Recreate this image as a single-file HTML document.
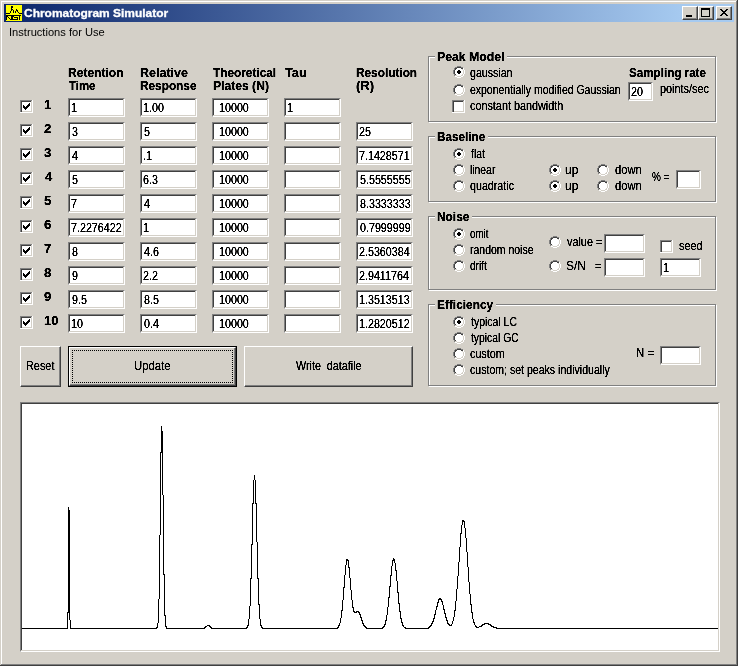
<!DOCTYPE html>
<html><head><meta charset="utf-8"><title>Chromatogram Simulator</title>
<style>

html,body{margin:0;padding:0;background:#D4D0C8;}
body{width:738px;height:666px;overflow:hidden;position:relative;font-family:"Liberation Sans",sans-serif;color:#000;}
#win{position:absolute;left:0;top:0;width:738px;height:666px;background:#D4D0C8;overflow:hidden;}
.abs{position:absolute;display:block;shape-rendering:crispEdges;}
.t{position:absolute;white-space:pre;font-size:12.3px;line-height:14px;height:14px;transform-origin:0 0;}
.b{font-weight:bold;}
.bm{filter:url(#bm);}
.tah{font-size:11px;}
.edit{position:absolute;background:#fff;border:1px solid;border-color:#808080 #fff #fff #808080;
  box-shadow:inset -1px -1px 0 0 #D4D0C8,inset 1px 1px 0 0 #404040;}
.gw{position:absolute;border:1px solid #fff;}
.gg{position:absolute;border:1px solid #808080;}
.lg{position:absolute;background:#D4D0C8;}
.btn{position:absolute;background:#D4D0C8;border:1px solid;border-color:#fff #404040 #404040 #fff;
  box-shadow:inset -1px -1px 0 0 #808080;}
.def{position:absolute;border:1px solid #000;}
.focus{position:absolute;border:1px dotted #000;}
.ln{position:absolute;}

</style></head><body><div id="win">
<svg width="0" height="0" style="position:absolute"><defs>
<symbol id="rb0" viewBox="0 0 12 12"><rect x="4" y="0" width="4" height="1" fill="#808080"/><rect x="2" y="1" width="2" height="1" fill="#808080"/><rect x="4" y="1" width="4" height="1" fill="#404040"/><rect x="8" y="1" width="2" height="1" fill="#808080"/><rect x="1" y="2" width="1" height="1" fill="#808080"/><rect x="2" y="2" width="2" height="1" fill="#404040"/><rect x="4" y="2" width="4" height="1" fill="#FFFFFF"/><rect x="8" y="2" width="2" height="1" fill="#404040"/><rect x="10" y="2" width="1" height="1" fill="#FFFFFF"/><rect x="1" y="3" width="1" height="1" fill="#808080"/><rect x="2" y="3" width="1" height="1" fill="#404040"/><rect x="3" y="3" width="6" height="1" fill="#FFFFFF"/><rect x="9" y="3" width="1" height="1" fill="#D4D0C8"/><rect x="10" y="3" width="1" height="1" fill="#FFFFFF"/><rect x="0" y="4" width="1" height="1" fill="#808080"/><rect x="1" y="4" width="1" height="1" fill="#404040"/><rect x="2" y="4" width="8" height="1" fill="#FFFFFF"/><rect x="10" y="4" width="1" height="1" fill="#D4D0C8"/><rect x="11" y="4" width="1" height="1" fill="#FFFFFF"/><rect x="0" y="5" width="1" height="1" fill="#808080"/><rect x="1" y="5" width="1" height="1" fill="#404040"/><rect x="2" y="5" width="8" height="1" fill="#FFFFFF"/><rect x="10" y="5" width="1" height="1" fill="#D4D0C8"/><rect x="11" y="5" width="1" height="1" fill="#FFFFFF"/><rect x="0" y="6" width="1" height="1" fill="#808080"/><rect x="1" y="6" width="1" height="1" fill="#404040"/><rect x="2" y="6" width="8" height="1" fill="#FFFFFF"/><rect x="10" y="6" width="1" height="1" fill="#D4D0C8"/><rect x="11" y="6" width="1" height="1" fill="#FFFFFF"/><rect x="0" y="7" width="1" height="1" fill="#808080"/><rect x="1" y="7" width="1" height="1" fill="#404040"/><rect x="2" y="7" width="8" height="1" fill="#FFFFFF"/><rect x="10" y="7" width="1" height="1" fill="#D4D0C8"/><rect x="11" y="7" width="1" height="1" fill="#FFFFFF"/><rect x="1" y="8" width="1" height="1" fill="#808080"/><rect x="2" y="8" width="1" height="1" fill="#404040"/><rect x="3" y="8" width="6" height="1" fill="#FFFFFF"/><rect x="9" y="8" width="1" height="1" fill="#D4D0C8"/><rect x="10" y="8" width="1" height="1" fill="#FFFFFF"/><rect x="1" y="9" width="1" height="1" fill="#808080"/><rect x="2" y="9" width="2" height="1" fill="#D4D0C8"/><rect x="4" y="9" width="4" height="1" fill="#FFFFFF"/><rect x="8" y="9" width="2" height="1" fill="#D4D0C8"/><rect x="10" y="9" width="1" height="1" fill="#FFFFFF"/><rect x="2" y="10" width="2" height="1" fill="#FFFFFF"/><rect x="4" y="10" width="4" height="1" fill="#D4D0C8"/><rect x="8" y="10" width="2" height="1" fill="#FFFFFF"/><rect x="4" y="11" width="4" height="1" fill="#FFFFFF"/></symbol>
<symbol id="rb1" viewBox="0 0 12 12"><rect x="4" y="0" width="4" height="1" fill="#808080"/><rect x="2" y="1" width="2" height="1" fill="#808080"/><rect x="4" y="1" width="4" height="1" fill="#404040"/><rect x="8" y="1" width="2" height="1" fill="#808080"/><rect x="1" y="2" width="1" height="1" fill="#808080"/><rect x="2" y="2" width="2" height="1" fill="#404040"/><rect x="4" y="2" width="4" height="1" fill="#FFFFFF"/><rect x="8" y="2" width="2" height="1" fill="#404040"/><rect x="10" y="2" width="1" height="1" fill="#FFFFFF"/><rect x="1" y="3" width="1" height="1" fill="#808080"/><rect x="2" y="3" width="1" height="1" fill="#404040"/><rect x="3" y="3" width="6" height="1" fill="#FFFFFF"/><rect x="9" y="3" width="1" height="1" fill="#D4D0C8"/><rect x="10" y="3" width="1" height="1" fill="#FFFFFF"/><rect x="0" y="4" width="1" height="1" fill="#808080"/><rect x="1" y="4" width="1" height="1" fill="#404040"/><rect x="2" y="4" width="3" height="1" fill="#FFFFFF"/><rect x="5" y="4" width="2" height="1" fill="#000000"/><rect x="7" y="4" width="3" height="1" fill="#FFFFFF"/><rect x="10" y="4" width="1" height="1" fill="#D4D0C8"/><rect x="11" y="4" width="1" height="1" fill="#FFFFFF"/><rect x="0" y="5" width="1" height="1" fill="#808080"/><rect x="1" y="5" width="1" height="1" fill="#404040"/><rect x="2" y="5" width="2" height="1" fill="#FFFFFF"/><rect x="4" y="5" width="4" height="1" fill="#000000"/><rect x="8" y="5" width="2" height="1" fill="#FFFFFF"/><rect x="10" y="5" width="1" height="1" fill="#D4D0C8"/><rect x="11" y="5" width="1" height="1" fill="#FFFFFF"/><rect x="0" y="6" width="1" height="1" fill="#808080"/><rect x="1" y="6" width="1" height="1" fill="#404040"/><rect x="2" y="6" width="2" height="1" fill="#FFFFFF"/><rect x="4" y="6" width="4" height="1" fill="#000000"/><rect x="8" y="6" width="2" height="1" fill="#FFFFFF"/><rect x="10" y="6" width="1" height="1" fill="#D4D0C8"/><rect x="11" y="6" width="1" height="1" fill="#FFFFFF"/><rect x="0" y="7" width="1" height="1" fill="#808080"/><rect x="1" y="7" width="1" height="1" fill="#404040"/><rect x="2" y="7" width="3" height="1" fill="#FFFFFF"/><rect x="5" y="7" width="2" height="1" fill="#000000"/><rect x="7" y="7" width="3" height="1" fill="#FFFFFF"/><rect x="10" y="7" width="1" height="1" fill="#D4D0C8"/><rect x="11" y="7" width="1" height="1" fill="#FFFFFF"/><rect x="1" y="8" width="1" height="1" fill="#808080"/><rect x="2" y="8" width="1" height="1" fill="#404040"/><rect x="3" y="8" width="6" height="1" fill="#FFFFFF"/><rect x="9" y="8" width="1" height="1" fill="#D4D0C8"/><rect x="10" y="8" width="1" height="1" fill="#FFFFFF"/><rect x="1" y="9" width="1" height="1" fill="#808080"/><rect x="2" y="9" width="2" height="1" fill="#D4D0C8"/><rect x="4" y="9" width="4" height="1" fill="#FFFFFF"/><rect x="8" y="9" width="2" height="1" fill="#D4D0C8"/><rect x="10" y="9" width="1" height="1" fill="#FFFFFF"/><rect x="2" y="10" width="2" height="1" fill="#FFFFFF"/><rect x="4" y="10" width="4" height="1" fill="#D4D0C8"/><rect x="8" y="10" width="2" height="1" fill="#FFFFFF"/><rect x="4" y="11" width="4" height="1" fill="#FFFFFF"/></symbol>
<symbol id="cb0" viewBox="0 0 13 13"><rect x="0" y="0" width="12" height="1" fill="#808080"/><rect x="12" y="0" width="1" height="1" fill="#FFFFFF"/><rect x="0" y="1" width="1" height="1" fill="#808080"/><rect x="1" y="1" width="10" height="1" fill="#404040"/><rect x="11" y="1" width="1" height="1" fill="#D4D0C8"/><rect x="12" y="1" width="1" height="1" fill="#FFFFFF"/><rect x="0" y="2" width="1" height="1" fill="#808080"/><rect x="1" y="2" width="1" height="1" fill="#404040"/><rect x="2" y="2" width="9" height="1" fill="#FFFFFF"/><rect x="11" y="2" width="1" height="1" fill="#D4D0C8"/><rect x="12" y="2" width="1" height="1" fill="#FFFFFF"/><rect x="0" y="3" width="1" height="1" fill="#808080"/><rect x="1" y="3" width="1" height="1" fill="#404040"/><rect x="2" y="3" width="9" height="1" fill="#FFFFFF"/><rect x="11" y="3" width="1" height="1" fill="#D4D0C8"/><rect x="12" y="3" width="1" height="1" fill="#FFFFFF"/><rect x="0" y="4" width="1" height="1" fill="#808080"/><rect x="1" y="4" width="1" height="1" fill="#404040"/><rect x="2" y="4" width="9" height="1" fill="#FFFFFF"/><rect x="11" y="4" width="1" height="1" fill="#D4D0C8"/><rect x="12" y="4" width="1" height="1" fill="#FFFFFF"/><rect x="0" y="5" width="1" height="1" fill="#808080"/><rect x="1" y="5" width="1" height="1" fill="#404040"/><rect x="2" y="5" width="9" height="1" fill="#FFFFFF"/><rect x="11" y="5" width="1" height="1" fill="#D4D0C8"/><rect x="12" y="5" width="1" height="1" fill="#FFFFFF"/><rect x="0" y="6" width="1" height="1" fill="#808080"/><rect x="1" y="6" width="1" height="1" fill="#404040"/><rect x="2" y="6" width="9" height="1" fill="#FFFFFF"/><rect x="11" y="6" width="1" height="1" fill="#D4D0C8"/><rect x="12" y="6" width="1" height="1" fill="#FFFFFF"/><rect x="0" y="7" width="1" height="1" fill="#808080"/><rect x="1" y="7" width="1" height="1" fill="#404040"/><rect x="2" y="7" width="9" height="1" fill="#FFFFFF"/><rect x="11" y="7" width="1" height="1" fill="#D4D0C8"/><rect x="12" y="7" width="1" height="1" fill="#FFFFFF"/><rect x="0" y="8" width="1" height="1" fill="#808080"/><rect x="1" y="8" width="1" height="1" fill="#404040"/><rect x="2" y="8" width="9" height="1" fill="#FFFFFF"/><rect x="11" y="8" width="1" height="1" fill="#D4D0C8"/><rect x="12" y="8" width="1" height="1" fill="#FFFFFF"/><rect x="0" y="9" width="1" height="1" fill="#808080"/><rect x="1" y="9" width="1" height="1" fill="#404040"/><rect x="2" y="9" width="9" height="1" fill="#FFFFFF"/><rect x="11" y="9" width="1" height="1" fill="#D4D0C8"/><rect x="12" y="9" width="1" height="1" fill="#FFFFFF"/><rect x="0" y="10" width="1" height="1" fill="#808080"/><rect x="1" y="10" width="1" height="1" fill="#404040"/><rect x="2" y="10" width="9" height="1" fill="#FFFFFF"/><rect x="11" y="10" width="1" height="1" fill="#D4D0C8"/><rect x="12" y="10" width="1" height="1" fill="#FFFFFF"/><rect x="0" y="11" width="1" height="1" fill="#808080"/><rect x="1" y="11" width="1" height="1" fill="#404040"/><rect x="2" y="11" width="10" height="1" fill="#D4D0C8"/><rect x="12" y="11" width="1" height="1" fill="#FFFFFF"/><rect x="0" y="12" width="13" height="1" fill="#FFFFFF"/></symbol>
<symbol id="cb1" viewBox="0 0 13 13"><rect x="0" y="0" width="12" height="1" fill="#808080"/><rect x="12" y="0" width="1" height="1" fill="#FFFFFF"/><rect x="0" y="1" width="1" height="1" fill="#808080"/><rect x="1" y="1" width="10" height="1" fill="#404040"/><rect x="11" y="1" width="1" height="1" fill="#D4D0C8"/><rect x="12" y="1" width="1" height="1" fill="#FFFFFF"/><rect x="0" y="2" width="1" height="1" fill="#808080"/><rect x="1" y="2" width="1" height="1" fill="#404040"/><rect x="2" y="2" width="9" height="1" fill="#FFFFFF"/><rect x="11" y="2" width="1" height="1" fill="#D4D0C8"/><rect x="12" y="2" width="1" height="1" fill="#FFFFFF"/><rect x="0" y="3" width="1" height="1" fill="#808080"/><rect x="1" y="3" width="1" height="1" fill="#404040"/><rect x="2" y="3" width="7" height="1" fill="#FFFFFF"/><rect x="9" y="3" width="1" height="1" fill="#000000"/><rect x="10" y="3" width="1" height="1" fill="#FFFFFF"/><rect x="11" y="3" width="1" height="1" fill="#D4D0C8"/><rect x="12" y="3" width="1" height="1" fill="#FFFFFF"/><rect x="0" y="4" width="1" height="1" fill="#808080"/><rect x="1" y="4" width="1" height="1" fill="#404040"/><rect x="2" y="4" width="6" height="1" fill="#FFFFFF"/><rect x="8" y="4" width="2" height="1" fill="#000000"/><rect x="10" y="4" width="1" height="1" fill="#FFFFFF"/><rect x="11" y="4" width="1" height="1" fill="#D4D0C8"/><rect x="12" y="4" width="1" height="1" fill="#FFFFFF"/><rect x="0" y="5" width="1" height="1" fill="#808080"/><rect x="1" y="5" width="1" height="1" fill="#404040"/><rect x="2" y="5" width="1" height="1" fill="#FFFFFF"/><rect x="3" y="5" width="1" height="1" fill="#000000"/><rect x="4" y="5" width="3" height="1" fill="#FFFFFF"/><rect x="7" y="5" width="3" height="1" fill="#000000"/><rect x="10" y="5" width="1" height="1" fill="#FFFFFF"/><rect x="11" y="5" width="1" height="1" fill="#D4D0C8"/><rect x="12" y="5" width="1" height="1" fill="#FFFFFF"/><rect x="0" y="6" width="1" height="1" fill="#808080"/><rect x="1" y="6" width="1" height="1" fill="#404040"/><rect x="2" y="6" width="1" height="1" fill="#FFFFFF"/><rect x="3" y="6" width="2" height="1" fill="#000000"/><rect x="5" y="6" width="1" height="1" fill="#FFFFFF"/><rect x="6" y="6" width="3" height="1" fill="#000000"/><rect x="9" y="6" width="2" height="1" fill="#FFFFFF"/><rect x="11" y="6" width="1" height="1" fill="#D4D0C8"/><rect x="12" y="6" width="1" height="1" fill="#FFFFFF"/><rect x="0" y="7" width="1" height="1" fill="#808080"/><rect x="1" y="7" width="1" height="1" fill="#404040"/><rect x="2" y="7" width="1" height="1" fill="#FFFFFF"/><rect x="3" y="7" width="5" height="1" fill="#000000"/><rect x="8" y="7" width="3" height="1" fill="#FFFFFF"/><rect x="11" y="7" width="1" height="1" fill="#D4D0C8"/><rect x="12" y="7" width="1" height="1" fill="#FFFFFF"/><rect x="0" y="8" width="1" height="1" fill="#808080"/><rect x="1" y="8" width="1" height="1" fill="#404040"/><rect x="2" y="8" width="2" height="1" fill="#FFFFFF"/><rect x="4" y="8" width="3" height="1" fill="#000000"/><rect x="7" y="8" width="4" height="1" fill="#FFFFFF"/><rect x="11" y="8" width="1" height="1" fill="#D4D0C8"/><rect x="12" y="8" width="1" height="1" fill="#FFFFFF"/><rect x="0" y="9" width="1" height="1" fill="#808080"/><rect x="1" y="9" width="1" height="1" fill="#404040"/><rect x="2" y="9" width="3" height="1" fill="#FFFFFF"/><rect x="5" y="9" width="1" height="1" fill="#000000"/><rect x="6" y="9" width="5" height="1" fill="#FFFFFF"/><rect x="11" y="9" width="1" height="1" fill="#D4D0C8"/><rect x="12" y="9" width="1" height="1" fill="#FFFFFF"/><rect x="0" y="10" width="1" height="1" fill="#808080"/><rect x="1" y="10" width="1" height="1" fill="#404040"/><rect x="2" y="10" width="9" height="1" fill="#FFFFFF"/><rect x="11" y="10" width="1" height="1" fill="#D4D0C8"/><rect x="12" y="10" width="1" height="1" fill="#FFFFFF"/><rect x="0" y="11" width="1" height="1" fill="#808080"/><rect x="1" y="11" width="1" height="1" fill="#404040"/><rect x="2" y="11" width="10" height="1" fill="#D4D0C8"/><rect x="12" y="11" width="1" height="1" fill="#FFFFFF"/><rect x="0" y="12" width="13" height="1" fill="#FFFFFF"/></symbol>
<symbol id="ico" viewBox="0 0 16 16"><rect x="0" y="0" width="16" height="1" fill="#FFFF00"/><rect x="0" y="1" width="5" height="1" fill="#FFFF00"/><rect x="5" y="1" width="2" height="1" fill="#000000"/><rect x="7" y="1" width="9" height="1" fill="#FFFF00"/><rect x="0" y="2" width="5" height="1" fill="#FFFF00"/><rect x="5" y="2" width="2" height="1" fill="#000000"/><rect x="7" y="2" width="9" height="1" fill="#FFFF00"/><rect x="0" y="3" width="5" height="1" fill="#FFFF00"/><rect x="5" y="3" width="1" height="1" fill="#000000"/><rect x="6" y="3" width="10" height="1" fill="#FFFF00"/><rect x="0" y="4" width="5" height="1" fill="#FFFF00"/><rect x="5" y="4" width="2" height="1" fill="#000000"/><rect x="7" y="4" width="3" height="1" fill="#FFFF00"/><rect x="10" y="4" width="1" height="1" fill="#000000"/><rect x="11" y="4" width="5" height="1" fill="#FFFF00"/><rect x="0" y="5" width="5" height="1" fill="#FFFF00"/><rect x="5" y="5" width="1" height="1" fill="#000000"/><rect x="6" y="5" width="1" height="1" fill="#FFFF00"/><rect x="7" y="5" width="1" height="1" fill="#000000"/><rect x="8" y="5" width="2" height="1" fill="#FFFF00"/><rect x="10" y="5" width="2" height="1" fill="#000000"/><rect x="12" y="5" width="4" height="1" fill="#FFFF00"/><rect x="0" y="6" width="4" height="1" fill="#FFFF00"/><rect x="4" y="6" width="1" height="1" fill="#000000"/><rect x="5" y="6" width="2" height="1" fill="#FFFF00"/><rect x="7" y="6" width="1" height="1" fill="#000000"/><rect x="8" y="6" width="1" height="1" fill="#FFFF00"/><rect x="9" y="6" width="1" height="1" fill="#000000"/><rect x="10" y="6" width="1" height="1" fill="#FFFF00"/><rect x="11" y="6" width="1" height="1" fill="#000000"/><rect x="12" y="6" width="4" height="1" fill="#FFFF00"/><rect x="0" y="7" width="4" height="1" fill="#FFFF00"/><rect x="4" y="7" width="1" height="1" fill="#000000"/><rect x="5" y="7" width="2" height="1" fill="#FFFF00"/><rect x="7" y="7" width="1" height="1" fill="#000000"/><rect x="8" y="7" width="1" height="1" fill="#FFFF00"/><rect x="9" y="7" width="1" height="1" fill="#000000"/><rect x="10" y="7" width="2" height="1" fill="#FFFF00"/><rect x="12" y="7" width="1" height="1" fill="#000000"/><rect x="13" y="7" width="3" height="1" fill="#FFFF00"/><rect x="0" y="8" width="4" height="1" fill="#000000"/><rect x="4" y="8" width="9" height="1" fill="#FFFF00"/><rect x="13" y="8" width="3" height="1" fill="#000000"/><rect x="0" y="9" width="16" height="1" fill="#FFFF00"/><rect x="0" y="10" width="15" height="1" fill="#000000"/><rect x="15" y="10" width="1" height="1" fill="#FFFF00"/><rect x="0" y="11" width="2" height="1" fill="#000000"/><rect x="2" y="11" width="3" height="1" fill="#FFFF00"/><rect x="5" y="11" width="3" height="1" fill="#000000"/><rect x="8" y="11" width="5" height="1" fill="#FFFF00"/><rect x="13" y="11" width="1" height="1" fill="#000000"/><rect x="14" y="11" width="2" height="1" fill="#FFFF00"/><rect x="0" y="12" width="1" height="1" fill="#000000"/><rect x="1" y="12" width="1" height="1" fill="#FFFF00"/><rect x="2" y="12" width="1" height="1" fill="#000000"/><rect x="3" y="12" width="2" height="1" fill="#FFFF00"/><rect x="5" y="12" width="2" height="1" fill="#000000"/><rect x="7" y="12" width="1" height="1" fill="#FFFF00"/><rect x="8" y="12" width="4" height="1" fill="#000000"/><rect x="12" y="12" width="1" height="1" fill="#FFFF00"/><rect x="13" y="12" width="1" height="1" fill="#000000"/><rect x="14" y="12" width="2" height="1" fill="#FFFF00"/><rect x="0" y="13" width="1" height="1" fill="#000000"/><rect x="1" y="13" width="2" height="1" fill="#FFFF00"/><rect x="3" y="13" width="1" height="1" fill="#000000"/><rect x="4" y="13" width="1" height="1" fill="#FFFF00"/><rect x="5" y="13" width="2" height="1" fill="#000000"/><rect x="7" y="13" width="4" height="1" fill="#FFFF00"/><rect x="11" y="13" width="1" height="1" fill="#000000"/><rect x="12" y="13" width="1" height="1" fill="#FFFF00"/><rect x="13" y="13" width="1" height="1" fill="#000000"/><rect x="14" y="13" width="2" height="1" fill="#FFFF00"/><rect x="0" y="14" width="1" height="1" fill="#000000"/><rect x="1" y="14" width="3" height="1" fill="#FFFF00"/><rect x="4" y="14" width="8" height="1" fill="#000000"/><rect x="12" y="14" width="1" height="1" fill="#FFFF00"/><rect x="13" y="14" width="1" height="1" fill="#000000"/><rect x="14" y="14" width="2" height="1" fill="#FFFF00"/><rect x="0" y="15" width="16" height="1" fill="#FFFF00"/></symbol>
<filter id="bm" x="-5%" y="-10%" width="110%" height="120%" color-interpolation-filters="sRGB"><feComponentTransfer><feFuncA type="linear" slope="2.6" intercept="-0.35"/></feComponentTransfer></filter>
</defs></svg>
<div class="ln" style="left:1px;top:1px;width:735px;height:1px;background:#fff"></div>
<div class="ln" style="left:1px;top:1px;width:1px;height:663px;background:#fff"></div>
<div class="ln" style="left:736px;top:1px;width:1px;height:664px;background:#808080"></div>
<div class="ln" style="left:1px;top:664px;width:736px;height:1px;background:#808080"></div>
<div class="ln" style="left:737px;top:0;width:1px;height:666px;background:#404040"></div>
<div class="ln" style="left:0;top:665px;width:738px;height:1px;background:#404040"></div>
<div id="title" style="position:absolute;left:4px;top:4px;width:730px;height:18px;background:linear-gradient(to right,#0A246A 0%,#A6CAF0 93%)"></div>
<svg class="abs" style="left:6px;top:5px" width="16" height="16"><use href="#ico"/></svg>
<div class="t b" style="left:23.92px;top:6px;transform:scaleX(1.0874);color:#fff;font-size:11px;-webkit-text-stroke:0.3px #fff;">Chromatogram Simulator</div>
<div class="btn" style="left:682px;top:6px;width:14px;height:12px"></div>
<div class="ln" style="left:686px;top:15px;width:6px;height:2px;background:#000"></div>
<div class="btn" style="left:698px;top:6px;width:14px;height:12px"></div>
<div class="ln" style="left:701px;top:8px;width:7px;height:6px;border:1px solid #000;border-top-width:2px"></div>
<div class="btn" style="left:716px;top:6px;width:14px;height:12px"></div>
<svg class="abs" style="left:720px;top:9px" width="8" height="7"><path fill="#000" d="M0 0h2v1h-2zM6 0h2v1h-2zM1 1h2v1h-2zM5 1h2v1h-2zM2 2h4v1h-4zM3 3h2v1h-2zM2 4h4v1h-4zM1 5h2v1h-2zM5 5h2v1h-2zM0 6h2v1h-2zM6 6h2v1h-2z"/></svg>
<div class="t" style="left:9.00px;top:25px;transform:scaleX(1.0109);font-size:11px;">Instructions for Use</div>
<div class="t b bm" style="left:68.22px;top:66px;transform:scaleX(0.9789);">Retention</div>
<div class="t b bm" style="left:69.29px;top:79px;transform:scaleX(0.9276);">Time</div>
<div class="t b bm" style="left:139.99px;top:66px;transform:scaleX(1.0165);">Relative</div>
<div class="t b bm" style="left:140.03px;top:79px;transform:scaleX(0.9607);">Response</div>
<div class="t b bm" style="left:213.38px;top:66px;transform:scaleX(0.9623);">Theoretical</div>
<div class="t b bm" style="left:212.71px;top:79px;transform:scaleX(0.9864);">Plates (N)</div>
<div class="t b bm" style="left:285.47px;top:66px;transform:scaleX(1.0375);">Tau</div>
<div class="t b bm" style="left:355.93px;top:66px;transform:scaleX(0.9614);">Resolution</div>
<div class="t b bm" style="left:356.04px;top:79px;transform:scaleX(1.0651);">(R)</div>
<svg class="abs" style="left:20px;top:100px" width="13" height="13"><use href="#cb1"/></svg>
<div class="t b bm" style="left:43.91px;top:98px;transform:scaleX(1.0700);">1</div>
<div class="edit" style="left:68px;top:98px;width:55px;height:17px"></div>
<div class="t bm" style="left:71.20px;top:101px;transform:scaleX(0.8720);">1</div>
<div class="edit" style="left:140px;top:98px;width:55px;height:17px"></div>
<div class="t bm" style="left:143.20px;top:101px;transform:scaleX(0.8720);">1.00</div>
<div class="edit" style="left:212px;top:98px;width:55px;height:17px"></div>
<div class="t bm" style="left:218.70px;top:101px;transform:scaleX(0.8720);">10000</div>
<div class="edit" style="left:284px;top:98px;width:55px;height:17px"></div>
<div class="t bm" style="left:287.20px;top:101px;transform:scaleX(0.8720);">1</div>
<svg class="abs" style="left:20px;top:124px" width="13" height="13"><use href="#cb1"/></svg>
<div class="t b bm" style="left:44.24px;top:122px;transform:scaleX(1.0700);">2</div>
<div class="edit" style="left:68px;top:122px;width:55px;height:17px"></div>
<div class="t bm" style="left:71.57px;top:125px;transform:scaleX(0.8720);">3</div>
<div class="edit" style="left:140px;top:122px;width:55px;height:17px"></div>
<div class="t bm" style="left:143.57px;top:125px;transform:scaleX(0.8720);">5</div>
<div class="edit" style="left:212px;top:122px;width:55px;height:17px"></div>
<div class="t bm" style="left:218.70px;top:125px;transform:scaleX(0.8720);">10000</div>
<div class="edit" style="left:284px;top:122px;width:55px;height:17px"></div>
<div class="edit" style="left:356px;top:122px;width:55px;height:17px"></div>
<div class="t bm" style="left:359.46px;top:125px;transform:scaleX(0.8720);">25</div>
<svg class="abs" style="left:20px;top:148px" width="13" height="13"><use href="#cb1"/></svg>
<div class="t b bm" style="left:44.37px;top:146px;transform:scaleX(1.0700);">3</div>
<div class="edit" style="left:68px;top:146px;width:55px;height:17px"></div>
<div class="t bm" style="left:71.79px;top:149px;transform:scaleX(0.8720);">4</div>
<div class="edit" style="left:140px;top:146px;width:55px;height:17px"></div>
<div class="t bm" style="left:143.03px;top:149px;transform:scaleX(0.8720);">.1</div>
<div class="edit" style="left:212px;top:146px;width:55px;height:17px"></div>
<div class="t bm" style="left:218.70px;top:149px;transform:scaleX(0.8720);">10000</div>
<div class="edit" style="left:284px;top:146px;width:55px;height:17px"></div>
<div class="edit" style="left:356px;top:146px;width:55px;height:17px"></div>
<div class="t bm" style="left:359.46px;top:149px;transform:scaleX(0.8720);">7.1428571</div>
<svg class="abs" style="left:20px;top:172px" width="13" height="13"><use href="#cb1"/></svg>
<div class="t b bm" style="left:44.50px;top:170px;transform:scaleX(1.0700);">4</div>
<div class="edit" style="left:68px;top:170px;width:55px;height:17px"></div>
<div class="t bm" style="left:71.57px;top:173px;transform:scaleX(0.8720);">5</div>
<div class="edit" style="left:140px;top:170px;width:55px;height:17px"></div>
<div class="t bm" style="left:143.46px;top:173px;transform:scaleX(0.8720);">6.3</div>
<div class="edit" style="left:212px;top:170px;width:55px;height:17px"></div>
<div class="t bm" style="left:218.70px;top:173px;transform:scaleX(0.8720);">10000</div>
<div class="edit" style="left:284px;top:170px;width:55px;height:17px"></div>
<div class="edit" style="left:356px;top:170px;width:55px;height:17px"></div>
<div class="t bm" style="left:359.57px;top:173px;transform:scaleX(0.8720);">5.5555555</div>
<svg class="abs" style="left:20px;top:196px" width="13" height="13"><use href="#cb1"/></svg>
<div class="t b bm" style="left:44.31px;top:194px;transform:scaleX(1.0700);">5</div>
<div class="edit" style="left:68px;top:194px;width:55px;height:17px"></div>
<div class="t bm" style="left:71.46px;top:197px;transform:scaleX(0.8720);">7</div>
<div class="edit" style="left:140px;top:194px;width:55px;height:17px"></div>
<div class="t bm" style="left:143.79px;top:197px;transform:scaleX(0.8720);">4</div>
<div class="edit" style="left:212px;top:194px;width:55px;height:17px"></div>
<div class="t bm" style="left:218.70px;top:197px;transform:scaleX(0.8720);">10000</div>
<div class="edit" style="left:284px;top:194px;width:55px;height:17px"></div>
<div class="edit" style="left:356px;top:194px;width:55px;height:17px"></div>
<div class="t bm" style="left:359.52px;top:197px;transform:scaleX(0.8720);">8.3333333</div>
<svg class="abs" style="left:20px;top:220px" width="13" height="13"><use href="#cb1"/></svg>
<div class="t b bm" style="left:44.24px;top:218px;transform:scaleX(1.0700);">6</div>
<div class="edit" style="left:68px;top:218px;width:55px;height:17px"></div>
<div class="t bm" style="left:71.46px;top:221px;transform:scaleX(0.8720);">7.2276422</div>
<div class="edit" style="left:140px;top:218px;width:55px;height:17px"></div>
<div class="t bm" style="left:143.20px;top:221px;transform:scaleX(0.8720);">1</div>
<div class="edit" style="left:212px;top:218px;width:55px;height:17px"></div>
<div class="t bm" style="left:218.70px;top:221px;transform:scaleX(0.8720);">10000</div>
<div class="edit" style="left:284px;top:218px;width:55px;height:17px"></div>
<div class="edit" style="left:356px;top:218px;width:55px;height:17px"></div>
<div class="t bm" style="left:359.57px;top:221px;transform:scaleX(0.8720);">0.7999999</div>
<svg class="abs" style="left:20px;top:244px" width="13" height="13"><use href="#cb1"/></svg>
<div class="t b bm" style="left:44.17px;top:242px;transform:scaleX(1.0700);">7</div>
<div class="edit" style="left:68px;top:242px;width:55px;height:17px"></div>
<div class="t bm" style="left:71.52px;top:245px;transform:scaleX(0.8720);">8</div>
<div class="edit" style="left:140px;top:242px;width:55px;height:17px"></div>
<div class="t bm" style="left:143.79px;top:245px;transform:scaleX(0.8720);">4.6</div>
<div class="edit" style="left:212px;top:242px;width:55px;height:17px"></div>
<div class="t bm" style="left:218.70px;top:245px;transform:scaleX(0.8720);">10000</div>
<div class="edit" style="left:284px;top:242px;width:55px;height:17px"></div>
<div class="edit" style="left:356px;top:242px;width:55px;height:17px"></div>
<div class="t bm" style="left:359.46px;top:245px;transform:scaleX(0.8720);">2.5360384</div>
<svg class="abs" style="left:20px;top:268px" width="13" height="13"><use href="#cb1"/></svg>
<div class="t b bm" style="left:44.31px;top:266px;transform:scaleX(1.0700);">8</div>
<div class="edit" style="left:68px;top:266px;width:55px;height:17px"></div>
<div class="t bm" style="left:71.52px;top:269px;transform:scaleX(0.8720);">9</div>
<div class="edit" style="left:140px;top:266px;width:55px;height:17px"></div>
<div class="t bm" style="left:143.46px;top:269px;transform:scaleX(0.8720);">2.2</div>
<div class="edit" style="left:212px;top:266px;width:55px;height:17px"></div>
<div class="t bm" style="left:218.70px;top:269px;transform:scaleX(0.8720);">10000</div>
<div class="edit" style="left:284px;top:266px;width:55px;height:17px"></div>
<div class="edit" style="left:356px;top:266px;width:55px;height:17px"></div>
<div class="t bm" style="left:359.46px;top:269px;transform:scaleX(0.8720);">2.9411764</div>
<svg class="abs" style="left:20px;top:292px" width="13" height="13"><use href="#cb1"/></svg>
<div class="t b bm" style="left:44.24px;top:290px;transform:scaleX(1.0700);">9</div>
<div class="edit" style="left:68px;top:290px;width:55px;height:17px"></div>
<div class="t bm" style="left:71.52px;top:293px;transform:scaleX(0.8720);">9.5</div>
<div class="edit" style="left:140px;top:290px;width:55px;height:17px"></div>
<div class="t bm" style="left:143.52px;top:293px;transform:scaleX(0.8720);">8.5</div>
<div class="edit" style="left:212px;top:290px;width:55px;height:17px"></div>
<div class="t bm" style="left:218.70px;top:293px;transform:scaleX(0.8720);">10000</div>
<div class="edit" style="left:284px;top:290px;width:55px;height:17px"></div>
<div class="edit" style="left:356px;top:290px;width:55px;height:17px"></div>
<div class="t bm" style="left:359.20px;top:293px;transform:scaleX(0.8720);">1.3513513</div>
<svg class="abs" style="left:20px;top:316px" width="13" height="13"><use href="#cb1"/></svg>
<div class="t b bm" style="left:43.92px;top:314px;transform:scaleX(1.0545);">10</div>
<div class="edit" style="left:68px;top:314px;width:55px;height:17px"></div>
<div class="t bm" style="left:71.20px;top:317px;transform:scaleX(0.8720);">10</div>
<div class="edit" style="left:140px;top:314px;width:55px;height:17px"></div>
<div class="t bm" style="left:143.57px;top:317px;transform:scaleX(0.8720);">0.4</div>
<div class="edit" style="left:212px;top:314px;width:55px;height:17px"></div>
<div class="t bm" style="left:218.70px;top:317px;transform:scaleX(0.8720);">10000</div>
<div class="edit" style="left:284px;top:314px;width:55px;height:17px"></div>
<div class="edit" style="left:356px;top:314px;width:55px;height:17px"></div>
<div class="t bm" style="left:359.20px;top:317px;transform:scaleX(0.8720);">1.2820512</div>
<div class="btn" style="left:20px;top:346px;width:39px;height:39px"></div>
<div class="t bm" style="left:25.83px;top:359px;transform:scaleX(0.8855);">Reset</div>
<div class="def" style="left:68px;top:346px;width:167px;height:39px"></div>
<div class="btn" style="left:69px;top:347px;width:165px;height:37px"></div>
<div class="focus" style="left:72px;top:350px;width:159px;height:31px"></div>
<div class="t bm" style="left:134.35px;top:359px;transform:scaleX(0.9243);">Update</div>
<div class="btn" style="left:244px;top:346px;width:167px;height:39px"></div>
<div class="t bm" style="left:295.95px;top:359px;transform:scaleX(0.8742);">Write  datafile</div>
<div class="gw" style="left:429px;top:57px;width:286px;height:64px"></div>
<div class="gg" style="left:428px;top:56px;width:286px;height:64px"></div>
<div class="lg" style="left:435px;top:50px;width:72px;height:14px"></div>
<div class="t b bm" style="left:437.20px;top:50px;transform:scaleX(0.9992);">Peak Model</div>
<svg class="abs" style="left:453px;top:66px" width="12" height="12"><use href="#rb1"/></svg>
<div class="t bm" style="left:470.37px;top:66px;transform:scaleX(0.8641);">gaussian</div>
<svg class="abs" style="left:453px;top:84px" width="12" height="12"><use href="#rb0"/></svg>
<div class="t bm" style="left:470.38px;top:83px;transform:scaleX(0.8511);">exponentially modified Gaussian</div>
<svg class="abs" style="left:452px;top:100px" width="13" height="13"><use href="#cb0"/></svg>
<div class="t bm" style="left:470.37px;top:99px;transform:scaleX(0.8799);">constant bandwidth</div>
<div class="t b bm" style="left:628.65px;top:66px;transform:scaleX(0.9465);">Sampling rate</div>
<div class="edit" style="left:628px;top:82px;width:23px;height:17px"></div>
<div class="t bm" style="left:631.46px;top:85px;transform:scaleX(0.8720);">20</div>
<div class="t bm" style="left:660.29px;top:82px;transform:scaleX(0.8839);">points/sec</div>
<div class="gw" style="left:429px;top:137px;width:286px;height:64px"></div>
<div class="gg" style="left:428px;top:136px;width:286px;height:64px"></div>
<div class="lg" style="left:435px;top:130px;width:53px;height:14px"></div>
<div class="t b bm" style="left:437.24px;top:130px;transform:scaleX(0.9529);">Baseline</div>
<svg class="abs" style="left:453px;top:148px" width="12" height="12"><use href="#rb1"/></svg>
<div class="t bm" style="left:470.64px;top:147px;transform:scaleX(0.8440);">flat</div>
<svg class="abs" style="left:453px;top:164px" width="12" height="12"><use href="#rb0"/></svg>
<div class="t bm" style="left:470.13px;top:163px;transform:scaleX(0.8422);">linear</div>
<svg class="abs" style="left:453px;top:180px" width="12" height="12"><use href="#rb0"/></svg>
<div class="t bm" style="left:470.37px;top:179px;transform:scaleX(0.8692);">quadratic</div>
<svg class="abs" style="left:549px;top:164px" width="12" height="12"><use href="#rb1"/></svg>
<div class="t bm" style="left:565.42px;top:163px;transform:scaleX(0.9788);">up</div>
<svg class="abs" style="left:549px;top:180px" width="12" height="12"><use href="#rb1"/></svg>
<div class="t bm" style="left:565.42px;top:179px;transform:scaleX(0.9788);">up</div>
<svg class="abs" style="left:597px;top:164px" width="12" height="12"><use href="#rb0"/></svg>
<div class="t bm" style="left:614.55px;top:163px;transform:scaleX(0.9109);">down</div>
<svg class="abs" style="left:597px;top:180px" width="12" height="12"><use href="#rb0"/></svg>
<div class="t bm" style="left:614.55px;top:179px;transform:scaleX(0.9109);">down</div>
<div class="t bm" style="left:652.35px;top:170px;transform:scaleX(0.8106);">% =</div>
<div class="edit" style="left:676px;top:170px;width:23px;height:17px"></div>
<div class="gw" style="left:429px;top:217px;width:286px;height:72px"></div>
<div class="gg" style="left:428px;top:216px;width:286px;height:72px"></div>
<div class="lg" style="left:435px;top:210px;width:37px;height:14px"></div>
<div class="t b bm" style="left:437.23px;top:210px;transform:scaleX(0.9682);">Noise</div>
<svg class="abs" style="left:453px;top:228px" width="12" height="12"><use href="#rb1"/></svg>
<div class="t bm" style="left:470.41px;top:227px;transform:scaleX(0.7953);">omit</div>
<svg class="abs" style="left:453px;top:244px" width="12" height="12"><use href="#rb0"/></svg>
<div class="t bm" style="left:470.12px;top:243px;transform:scaleX(0.8526);">random noise</div>
<svg class="abs" style="left:453px;top:260px" width="12" height="12"><use href="#rb0"/></svg>
<div class="t bm" style="left:470.40px;top:259px;transform:scaleX(0.8130);">drift</div>
<svg class="abs" style="left:549px;top:236px" width="12" height="12"><use href="#rb0"/></svg>
<div class="t bm" style="left:566.75px;top:235px;transform:scaleX(0.8816);">value =</div>
<svg class="abs" style="left:549px;top:260px" width="12" height="12"><use href="#rb0"/></svg>
<div class="t bm" style="left:566.26px;top:259px;transform:scaleX(0.9714);">S/N</div>
<div class="t bm" style="left:595.43px;top:259px;transform:scaleX(0.9220);">=</div>
<div class="edit" style="left:604px;top:234px;width:39px;height:17px"></div>
<div class="edit" style="left:604px;top:258px;width:39px;height:17px"></div>
<svg class="abs" style="left:660px;top:240px" width="13" height="13"><use href="#cb0"/></svg>
<div class="t bm" style="left:678.67px;top:239px;transform:scaleX(0.8837);">seed</div>
<div class="edit" style="left:660px;top:258px;width:39px;height:17px"></div>
<div class="t bm" style="left:663.20px;top:261px;transform:scaleX(0.8720);">1</div>
<div class="gw" style="left:429px;top:305px;width:286px;height:80px"></div>
<div class="gg" style="left:428px;top:304px;width:286px;height:80px"></div>
<div class="lg" style="left:435px;top:298px;width:61px;height:14px"></div>
<div class="t b bm" style="left:437.23px;top:298px;transform:scaleX(0.9658);">Efficiency</div>
<svg class="abs" style="left:453px;top:316px" width="12" height="12"><use href="#rb1"/></svg>
<div class="t bm" style="left:470.64px;top:315px;transform:scaleX(0.8523);">typical LC</div>
<svg class="abs" style="left:453px;top:332px" width="12" height="12"><use href="#rb0"/></svg>
<div class="t bm" style="left:470.64px;top:331px;transform:scaleX(0.8415);">typical GC</div>
<svg class="abs" style="left:453px;top:348px" width="12" height="12"><use href="#rb0"/></svg>
<div class="t bm" style="left:470.37px;top:347px;transform:scaleX(0.8755);">custom</div>
<svg class="abs" style="left:453px;top:364px" width="12" height="12"><use href="#rb0"/></svg>
<div class="t bm" style="left:470.38px;top:363px;transform:scaleX(0.8592);">custom; set peaks individually</div>
<div class="t bm" style="left:635.69px;top:346px;transform:scaleX(0.9276);">N =</div>
<div class="edit" style="left:660px;top:346px;width:39px;height:17px"></div>
<div id="chart" class="edit" style="left:20px;top:402px;width:698px;height:248px"></div>
<svg class="abs" style="left:0;top:0" width="738" height="666" viewBox="0 0 738 666"><path fill="#000" d="M22 628h45v1h-45zM67 612h1v17h-1zM68 507h1v106h-1zM69 510h1v110h-1zM70 620h1v9h-1zM71 628h85v1h-85zM156 627h1v2h-1zM157 623h1v5h-1zM158 599h1v24h-1zM159 535h1v64h-1zM160 452h1v83h-1zM161 426h1v27h-1zM162 431h1v64h-1zM163 495h1v80h-1zM164 574h1v42h-1zM165 615h1v12h-1zM166 626h1v3h-1zM167 628h37v1h-37zM204 627h1v2h-1zM205 626h1v2h-1zM206 626h1v1h-1zM207 625h2v1h-2zM209 625h1v2h-1zM210 626h1v2h-1zM211 627h1v2h-1zM212 628h34v1h-34zM246 627h1v2h-1zM247 625h1v3h-1zM248 619h1v7h-1zM249 606h1v13h-1zM250 578h1v28h-1zM251 544h1v35h-1zM252 503h1v42h-1zM253 480h1v24h-1zM254 475h1v5h-1zM255 480h1v24h-1zM256 503h1v39h-1zM257 542h1v37h-1zM258 578h1v27h-1zM259 604h1v15h-1zM260 619h1v7h-1zM261 625h1v3h-1zM262 627h1v2h-1zM263 628h74v1h-74zM337 627h1v2h-1zM338 625h1v3h-1zM339 623h1v3h-1zM340 618h1v5h-1zM341 610h1v8h-1zM342 600h1v11h-1zM343 587h1v13h-1zM344 575h1v13h-1zM345 565h1v10h-1zM346 559h1v6h-1zM347 559h1v2h-1zM348 560h1v8h-1zM349 567h1v11h-1zM350 578h1v12h-1zM351 590h1v10h-1zM352 600h1v8h-1zM353 607h1v5h-1zM354 611h1v2h-1zM355 612h1v1h-1zM356 611h1v2h-1zM357 611h1v1h-1zM358 611h1v2h-1zM359 612h1v3h-1zM360 614h1v4h-1zM361 617h1v4h-1zM362 620h1v4h-1zM363 623h1v3h-1zM364 625h1v2h-1zM365 626h1v2h-1zM366 627h1v2h-1zM367 628h15v1h-15zM382 627h1v2h-1zM383 626h1v2h-1zM384 624h1v3h-1zM385 620h1v5h-1zM386 615h1v6h-1zM387 607h1v8h-1zM388 597h1v10h-1zM389 586h1v12h-1zM390 575h1v12h-1zM391 566h1v10h-1zM392 560h1v6h-1zM393 558h1v3h-1zM394 559h1v4h-1zM395 563h1v8h-1zM396 570h1v11h-1zM397 581h1v12h-1zM398 592h1v12h-1zM399 603h1v9h-1zM400 611h1v8h-1zM401 618h1v5h-1zM402 622h1v4h-1zM403 625h1v2h-1zM404 627h1v1h-1zM405 627h1v2h-1zM406 628h22v1h-22zM428 627h1v2h-1zM429 626h1v2h-1zM430 625h1v2h-1zM431 623h1v3h-1zM432 621h1v3h-1zM433 618h1v4h-1zM434 614h1v5h-1zM435 610h1v5h-1zM436 606h1v4h-1zM437 602h1v5h-1zM438 599h1v4h-1zM439 598h2v2h-2zM441 599h1v3h-1zM442 601h1v4h-1zM443 605h1v5h-1zM444 609h1v5h-1zM445 613h1v5h-1zM446 617h1v4h-1zM447 620h1v4h-1zM448 623h1v2h-1zM449 624h1v2h-1zM450 625h1v1h-1zM451 624h1v2h-1zM452 621h1v3h-1zM453 617h1v4h-1zM454 610h1v7h-1zM455 601h1v10h-1zM456 589h1v12h-1zM457 576h1v13h-1zM458 562h1v14h-1zM459 547h1v15h-1zM460 533h1v14h-1zM461 525h1v9h-1zM462 520h1v5h-1zM463 520h1v2h-1zM464 521h1v7h-1zM465 528h1v10h-1zM466 538h1v14h-1zM467 552h1v15h-1zM468 567h1v15h-1zM469 582h1v12h-1zM470 594h1v11h-1zM471 604h1v9h-1zM472 612h1v7h-1zM473 619h1v4h-1zM474 622h1v3h-1zM475 625h1v2h-1zM476 626h1v2h-1zM477 627h2v1h-2zM479 626h2v1h-2zM481 625h1v2h-1zM482 624h1v2h-1zM483 624h1v1h-1zM484 623h1v2h-1zM485 623h3v1h-3zM488 623h1v2h-1zM489 624h1v1h-1zM490 624h1v2h-1zM491 625h1v2h-1zM492 626h1v1h-1zM493 626h1v2h-1zM494 627h2v1h-2zM496 627h1v2h-1zM497 628h221v1h-221z"/></svg>
</div></body></html>
